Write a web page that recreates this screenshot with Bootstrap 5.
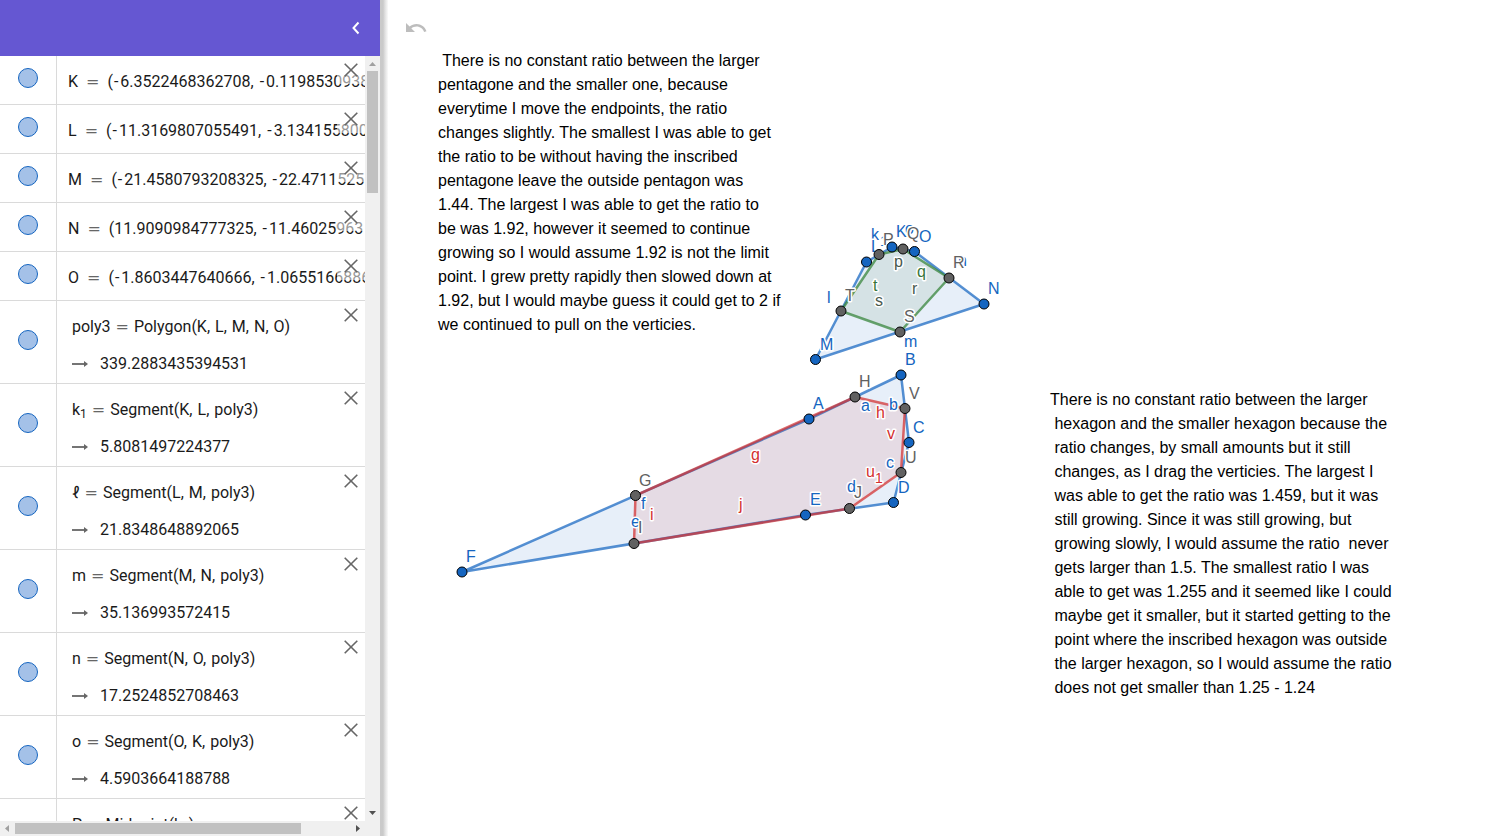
<!DOCTYPE html>
<html lang="en">
<head>
<meta charset="utf-8">
<meta name="viewport" content="width=device-width, initial-scale=1">
<title>Pentagon and hexagon ratios</title>
<link href="https://cdn.jsdelivr.net/npm/bootstrap@5.3.0/dist/css/bootstrap.min.css" rel="stylesheet">
<style>
  body { font: 16px/24px "Liberation Sans", Arial, sans-serif; color: #000; background: #fff; }
  .app { height: calc(100vh - 2px); }
  .algebra { width: 380px; }
  .algebra-head { height: 56px; background: #6557d2; padding-right: 16px; }
  .bare { border: 0; background: none; padding: 0; line-height: 0; display: block; }
  .entry { border-bottom: 1px solid #dadada; }
  .marker-cell { width: 57px; border-right: 1px solid #dadada; padding-bottom: 4px; }
  .marker { width: 20px; height: 20px; border-radius: 50%; border: 1px solid #1565c0; background: #a4c1e8; padding: 0; }
  .formula { font-family: Roboto, sans-serif; color: #1a1a1a; white-space: nowrap; min-width: 0; }
  .short .formula { height: 48px; line-height: 52px; padding-left: 11px; }
  .tall .formula { height: 82px; padding: 7px 0 0 15px; line-height: 37px; }
  .eq { margin: 0 5px; color: #666; font-family: "DejaVu Sans", sans-serif; line-height: 0; }
  .short .eq { margin: 0 8px; }
  .cm { margin-right: 5px; }
  .neg { margin: 0 2px 0 1px; }
  .formula sub { font-size: 12px; bottom: -3px; line-height: 0; }
  .arrow { margin-right: 12px; vertical-align: 2px; }
  .remove { width: 28px; height: 28px; padding: 7px; top: 0; right: 0; background: rgba(255,255,255,.55); }
  .track { background: #f0f0f0; }
  .track-y { width: 15px; }
  .track-x { height: 15px; }
  .thumb { background: #c1c1c1; }
  .thumb-y { width: 11px; height: 16%; }
  .thumb-x { height: 11px; width: 286px; }
  .gutter { width: 8px; background: linear-gradient(to right, #cacaca 0, #cacaca 3px, #e0e0e0 5px, #fafafa 8px); }
  .undo { left: 16px; top: 16px; }
  .note { white-space: pre; }
  .note-pentagon { left: 50px; top: 49px; }
  .note-hexagon { left: 662px; top: 388px; }
  .labels text { font-size: 16px; stroke: #fff; stroke-width: 3px; stroke-linejoin: round; paint-order: stroke; }
  .labels .low { font-size: 14px; }
  .blue { fill: #1565c0; } .grey { fill: #616161; } .green { fill: #38763c; } .red { fill: #d32f2f; }
  .dark { fill: #48594d; }
</style>
</head>
<body>
<svg class="d-none" aria-hidden="true">
  <symbol id="cross" viewBox="0 0 14 14"><path d="M.7.7l12.6 12.6M13.3.7L.7 13.3" stroke="#666" stroke-width="1.6" fill="none"/></symbol>
  <symbol id="arrow" viewBox="0 0 16 6"><path d="M0 3h13" stroke="#666" stroke-width="1.800"/><path d="M12 0l4 3-4 3z" fill="#666"/></symbol>
</svg>
<div class="app d-flex overflow-hidden">
  <aside class="algebra d-flex flex-column flex-shrink-0">
    <header class="algebra-head d-flex align-items-center justify-content-end flex-shrink-0">
      <button class="bare" aria-label="Collapse panel"><svg width="16" height="16" viewBox="0 0 16 16" fill="none" stroke="#fff" stroke-width="2"><path d="M10.500 2.500L5.500 8l5 5.500"/></svg></button>
    </header>
    <div class="d-flex flex-fill overflow-hidden">
      <div class="flex-fill overflow-hidden" id="entries"></div>
      <div class="track track-y d-flex flex-column align-items-center flex-shrink-0">
        <svg width="15" height="15"><path d="M4 10l3.500-4 3.500 4z" fill="#a0a0a0"/></svg>
        <div class="thumb thumb-y"></div>
        <svg class="mt-auto" width="15" height="15"><path d="M4 5l3.500 4L11 5z" fill="#505050"/></svg>
      </div>
    </div>
    <div class="d-flex flex-shrink-0 track">
      <div class="track-x d-flex align-items-center flex-fill">
        <svg width="15" height="15"><path d="M9 4L5 7.500 9 11z" fill="#a0a0a0"/></svg>
        <div class="thumb thumb-x"></div>
        <svg class="ms-auto" width="15" height="15"><path d="M6 4l4 3.500L6 11z" fill="#505050"/></svg>
      </div>
      <div class="track-y"></div>
    </div>
  </aside>
  <div class="gutter flex-shrink-0"></div>
  <main class="position-relative flex-fill overflow-hidden">
    <svg class="w-100 h-100 d-block" role="img" aria-label="Pentagon and hexagon with inscribed midpoint polygons">
      <g transform="translate(-388 0)">
        <g stroke-width="2.500" stroke-linejoin="round">
          <g fill="#1565c0" fill-opacity=".1" stroke="#1565c0" stroke-opacity=".72">
            <polygon points="892,247 866.500,262 815.500,359.500 984,304 914.500,251.500"/>
            <polygon points="809,419 901,375 909,442.500 893.500,502.500 805.500,515 462,572"/>
          </g>
          <polygon points="879,254.500 841,311 900,332 949,278 903,249" fill="#38763c" fill-opacity=".1" stroke="#38863c" stroke-opacity=".75"/>
          <polygon points="635.500,495.500 855,397 905,408.500 901,472.500 849.500,508.500 634,543.500" fill="#d32f2f" fill-opacity=".1" stroke="#d32f2f" stroke-opacity=".72"/>
        </g>
        <g class="labels" id="labels"></g>
        <g id="points" stroke="#000" stroke-width="1"></g>
      </g>
    </svg>
    <button class="bare undo position-absolute" aria-label="Undo"><svg width="24" height="24" viewBox="0 0 24 24" fill="#bdbdbd"><path d="M12.500 8c-2.650 0-5.050.99-6.900 2.600L2 7v9h9l-3.620-3.620c1.390-1.160 3.160-1.880 5.120-1.880 3.540 0 6.550 2.310 7.600 5.500l2.370-.78C21.080 11.030 17.150 8 12.500 8z"/></svg></button>
    <p class="note note-pentagon position-absolute mb-0"> There is no constant ratio between the larger
pentagone and the smaller one, because
everytime I move the endpoints, the ratio
changes slightly. The smallest I was able to get
the ratio to be without having the inscribed
pentagone leave the outside pentagon was
1.44. The largest I was able to get the ratio to
be was 1.92, however it seemed to continue
growing so I would assume 1.92 is not the limit
point. I grew pretty rapidly then slowed down at
1.92, but I would maybe guess it could get to 2 if
we continued to pull on the verticies.</p>
    <p class="note note-hexagon position-absolute mb-0">There is no constant ratio between the larger
 hexagon and the smaller hexagon because the
 ratio changes, by small amounts but it still
 changes, as I drag the verticies. The largest I
 was able to get the ratio was 1.459, but it was
 still growing. Since it was still growing, but
 growing slowly, I would assume the ratio  never
 gets larger than 1.5. The smallest ratio I was
 able to get was 1.255 and it seemed like I could
 maybe get it smaller, but it started getting to the
 point where the inscribed hexagon was outside
 the larger hexagon, so I would assume the ratio
 does not get smaller than 1.25 - 1.24</p>
  </main>
</div>
<script src="https://cdn.jsdelivr.net/npm/bootstrap@5.3.0/dist/js/bootstrap.bundle.min.js"></script>
<script>
  // Algebra rows: [name, definition, value]; rows without a value are coordinates
  const rows = [
    ['K', '(-6.3522468362708, -0.1198530938'],
    ['L', '(-11.3169807055491, -3.134155800'],
    ['M', '(-21.4580793208325, -22.4711525'],
    ['N', '(11.9090984777325, -11.46025963'],
    ['O', '(-1.8603447640666, -1.0655166886'],
    ['poly3', 'Polygon(K, L, M, N, O)', '339.2883435394531'],
    ['k<sub>1</sub>', 'Segment(K, L, poly3)', '5.8081497224377'],
    ['ℓ', 'Segment(L, M, poly3)', '21.8348648892065'],
    ['m', 'Segment(M, N, poly3)', '35.136993572415'],
    ['n', 'Segment(N, O, poly3)', '17.2524852708463'],
    ['o', 'Segment(O, K, poly3)', '4.5903664188788'],
    ['P', 'Midpoint(k<sub>1</sub>)', '']
  ];
  document.getElementById('entries').innerHTML = rows.map(([name, def, value]) => {
    const tall = value !== undefined;
    const text = def.replace(/, /g, '<span class="cm">,</span>').replace(/-/g, '<span class="neg">-</span>');
    return `<div class="entry d-flex position-relative ${tall ? 'tall' : 'short'}">
      <div class="marker-cell d-flex align-items-center justify-content-center flex-shrink-0"><button class="marker" aria-label="Show or hide"></button></div>
      <div class="formula flex-fill overflow-hidden"><div>${name}<span class="eq">=</span>${text}</div>${tall ? `<div><svg class="arrow" width="16" height="6"><use href="#arrow"/></svg>${value}</div>` : ''}</div>
      <button class="bare remove position-absolute" aria-label="Delete"><svg width="14" height="14"><use href="#cross"/></svg></button>
    </div>`;
  }).join('').replace(/class="cm">,<\/span><span class="neg"/g, 'class="cm">,</span><span class="neg"');

  // Labels: [text, x, baseline, colour, subscript]
  const labels = [
    ['k', 871, 240, 'blue', '1'], ['L', 871, 252, 'blue'], ['P', 883, 245, 'grey'],
    ['K', 896, 237, 'blue'], ['o', 905, 234, 'blue'], ['Q', 907, 239, 'grey'], ['O', 919, 242, 'blue'],
    ['n', 958, 266, 'blue'], ['R', 953, 268, 'grey'], ['N', 988, 294, 'blue'],
    ['l', 827, 303, 'blue'], ['T', 845, 301, 'grey'], ['M', 820, 350, 'blue'], ['S', 904, 322, 'grey'], ['m', 904, 347, 'blue'],
    ['p', 894, 267, 'dark'], ['q', 917, 277, 'green'], ['r', 912, 294, 'dark'], ['s', 875, 306, 'dark'], ['t', 873, 291, 'green'],
    ['B', 905, 365, 'blue'], ['H', 859, 387, 'grey'], ['V', 909, 399, 'grey'], ['A', 813, 409, 'blue'],
    ['a', 861, 411, 'blue'], ['b', 889, 410, 'blue'], ['h', 876, 418, 'red'], ['C', 913, 433, 'blue'], ['v', 887, 439, 'red'],
    ['U', 905, 463, 'grey'], ['c', 886, 468, 'blue'], ['u', 866, 477, 'red', '1'], ['D', 898, 493, 'blue'],
    ['d', 847, 492, 'blue'], ['J', 854, 498, 'grey'], ['E', 810, 505, 'blue'], ['G', 639, 486, 'grey'],
    ['f', 641, 509, 'blue'], ['e', 631, 527, 'blue'], ['I', 638, 533, 'grey'], ['i', 650, 520, 'red'],
    ['g', 751, 460, 'red'], ['j', 739, 510, 'red'], ['F', 466, 562, 'blue']
  ];
  document.getElementById('labels').innerHTML = labels.map(([t, x, y, c, s]) =>
    `<text x="${x}" y="${y}" class="${c}">${t}</text>` + (s ? `<text x="${x + 9}" y="${y + 6}" class="${c} low">${s}</text>` : '')).join('');

  const free = [[462,572],[809,419],[901,375],[909,442.5],[893.5,502.5],[805.5,515],[815.5,359.5],[866.5,262],[892,247],[914.5,251.5],[984,304]];
  const mid = [[635.5,495.5],[634,543.5],[855,397],[905,408.5],[901,472.5],[849.5,508.5],[841,311],[879,254.5],[903,249],[949,278],[900,332]];
  const dots = (list, fill) => list.map(([x, y]) => `<circle cx="${x}" cy="${y}" r="5" fill="${fill}"/>`).join('');
  document.getElementById('points').innerHTML = dots(free, '#1565c0') + dots(mid, '#616161');
</script>
</body>
</html>
